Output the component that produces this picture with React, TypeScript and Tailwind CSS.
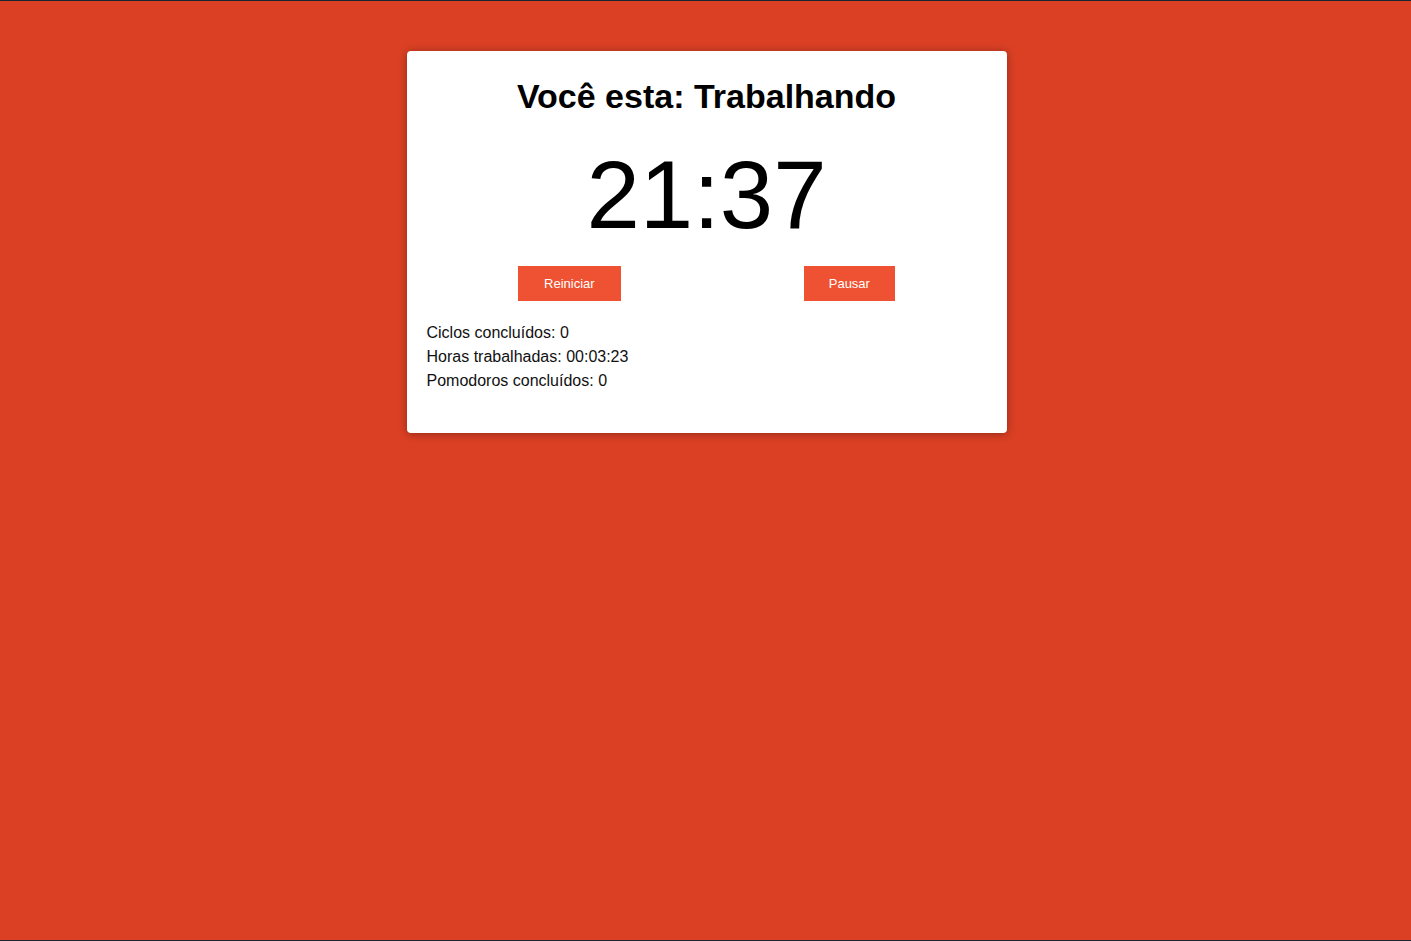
export default function App() {
  return (
    <div
      className="min-h-screen h-[941px] flex flex-col items-center pl-[2px] bg-[#db4024] border-t border-b border-[#1b2430]"
      style={{ fontFamily: '"Liberation Sans", Arial, sans-serif' }}
    >
      {/* Card */}
      <div className="mt-[50px] w-[600px] bg-white rounded shadow-[0_1px_8px_rgba(0,0,0,0.35)] px-5 pt-5 pb-[40px]">
        <h1 className="mt-2 text-center text-[34px] leading-none font-bold text-black">
          Você esta: Trabalhando
        </h1>
        <div className="mt-[34px] text-center text-[96px] leading-none text-black">21:37</div>

        <div className="mt-[23px] flex justify-around">
          <button className="h-[35px] px-[26px] bg-[#ee5233] text-white text-[13px]">Reiniciar</button>
          <button className="h-[35px] px-[25px] bg-[#ee5233] text-white text-[13px]">Pausar</button>
        </div>

        <div className="mt-[20px] text-base leading-6 text-[#111]">
          <p>Ciclos concluídos: 0</p>
          <p>Horas trabalhadas: 00:03:23</p>
          <p>Pomodoros concluídos: 0</p>
        </div>
      </div>
    </div>
  );
}
